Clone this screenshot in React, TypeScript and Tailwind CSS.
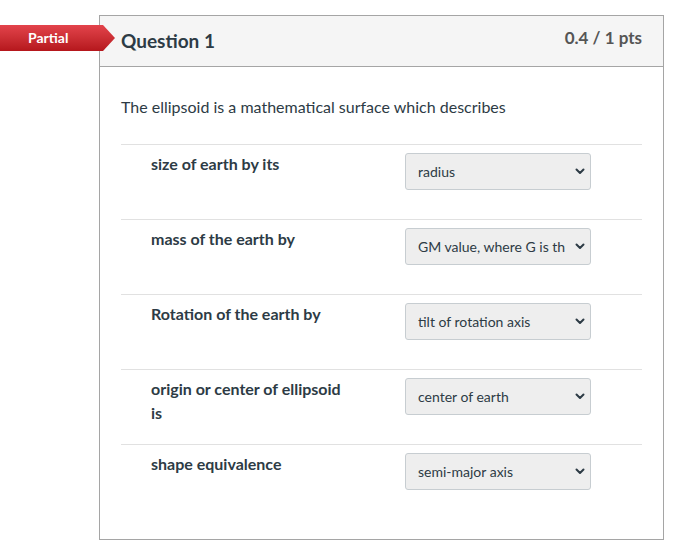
import React from "react";

const rows: { label: string; value: string }[] = [
  { label: "size of earth by its", value: "radius" },
  { label: "mass of the earth by", value: "GM value, where G is th" },
  { label: "Rotation of the earth by", value: "tilt of rotation axis" },
  { label: "origin or center of ellipsoid is", value: "center of earth" },
  { label: "shape equivalence", value: "semi-major axis" },
];

function Chevron() {
  return (
    <svg width="10" height="7" viewBox="0 0 10 7" className="shrink-0">
      <path d="M1.5 1.5 L5 5 L8.5 1.5" fill="none" stroke="#2d3b45" strokeWidth="2" strokeLinecap="round" strokeLinejoin="round" />
    </svg>
  );
}

export default function App() {
  return (
    <div className="relative w-[689px] h-[559px] bg-white overflow-hidden" style={{ fontFamily: "Lato, 'Noto Sans', sans-serif" }}>
      <div className="ml-[99px] mt-[15px] w-[565px] h-[525px] border border-[#a5a5a5] flex flex-col">
        <div className="h-[51px] bg-[#f5f5f5] border-b border-[#a5a5a5] flex justify-between items-start px-[21px]">
          <div className="pt-[13px] text-[19px] leading-[24px] font-bold text-[#2d3b45]">Question 1</div>
          <div className="pt-[11px] text-[17px] leading-[22px] font-bold text-[#555555]">0.4 / 1 pts</div>
        </div>
        <div className="px-[21px] pt-[28px]">
          <div className="text-[16px] leading-[24px] text-[#2d3b45]">The ellipsoid is a mathematical surface which describes</div>
          <div className="mt-[25px]">
            {rows.map((r) => (
              <div key={r.label} className="h-[75px] border-t border-[#e1e1e1] flex items-start pt-[7px]">
                <div className="w-[284px] pl-[30px] pr-[60px] text-[16px] leading-[24px] font-bold text-[#2d3b45]">{r.label}</div>
                <div className="mt-[1px] w-[186px] h-[37px] bg-[#eeeeee] border border-[#c7cdd1] rounded-[3px] flex items-center justify-between pl-[12px] pr-[5px]">
                  <span className="w-[148px] text-[14px] text-[#2d3b45] whitespace-nowrap overflow-hidden">{r.value}</span>
                  <Chevron />
                </div>
              </div>
            ))}
          </div>
        </div>
      </div>
      <div className="absolute left-0 top-[25px] w-[115px] h-[26px] bg-gradient-to-b from-[#e3434b] to-[#b5161c] [clip-path:polygon(0_0,103px_0,115px_50%,103px_100%,0_100%)] flex items-center">
        <span className="pl-[28px] text-[14px] font-bold text-white leading-none">Partial</span>
      </div>
    </div>
  );
}
